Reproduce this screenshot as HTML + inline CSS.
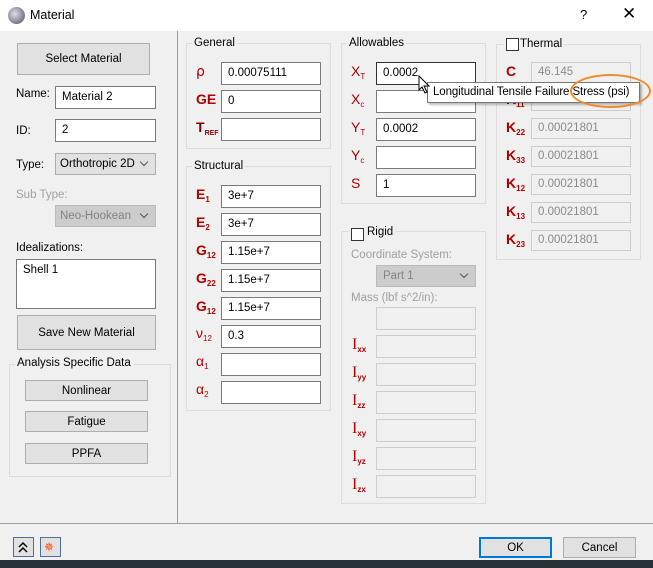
<!DOCTYPE html>
<html><head><meta charset="utf-8"><style>
*{margin:0;padding:0;box-sizing:border-box}
body{width:653px;height:568px;position:relative;background:#f0f0f0;font-family:"Liberation Sans",sans-serif;font-size:11.5px;color:#000;overflow:hidden}
.a{position:absolute}
.title{left:0;top:0;width:653px;height:31px;background:#fff}
.in{position:absolute;height:23px;background:#fff;border:1px solid #7a7a7a;padding:0 0 0 6px;line-height:21px;font-size:11.5px}
.dis{background:#f0f0f0;border:1px solid #cccccc;color:#8a8a8a}
.btn{position:absolute;background:#e1e1e1;border:1px solid #adadad;text-align:center;font-size:11.5px}
.grp{position:absolute;border:1px solid #dcdcdc}
.gl{position:absolute;background:#f0f0f0;padding:0 2px;font-size:11.5px}
.lb{position:absolute;color:#b00000;font-size:14px;font-weight:bold}
.lb sub{font-size:8px;vertical-align:-3px}
.sel{position:absolute;height:22px;border:1px solid #adadad;background:#e1e1e1;padding:0 0 0 6px;line-height:20px}
.sel:after{content:"";position:absolute;right:8px;top:5px;width:5px;height:5px;border-right:1px solid #555;border-bottom:1px solid #555;transform:rotate(45deg)}
.gray{color:#a0a0a0}
.cb{position:absolute;width:13px;height:13px;border:1px solid #333;background:#fff}
.Il{position:absolute;color:#b00000;font-family:"Liberation Serif",serif;font-size:16px}
.Il sub{font-family:"Liberation Sans",sans-serif;font-size:8px;font-weight:bold;vertical-align:-3px}
</style></head><body>
<div class="a title"></div>
<div class="a" style="left:8px;top:7px;width:17px;height:17px;border-radius:50%;background:radial-gradient(circle at 40% 40%,#dde,#778 70%,#445)"></div>
<div class="a" style="left:30px;top:8px;font-size:12.5px">Material</div>
<div class="a" style="left:580px;top:7px;font-size:13px">?</div>
<div class="a" style="left:622px;top:4px;font-size:17px">✕</div>

<div class="a" style="left:177px;top:31px;width:1px;height:492px;background:#a0a0a0"></div>
<div class="a" style="left:0;top:523px;width:653px;height:1px;background:#a0a0a0"></div>
<div class="a" style="left:0;top:560px;width:653px;height:8px;background:#263238"></div>

<!-- left -->
<div class="btn" style="left:17px;top:43px;width:133px;height:32px;line-height:31px">Select Material</div>
<div class="a" style="left:16px;top:88px">Name:</div>
<div class="in" style="left:55px;top:86px;width:101px">Material 2</div>
<div class="a" style="left:16px;top:125px">ID:</div>
<div class="in" style="left:55px;top:119px;width:101px">2</div>
<div class="a" style="left:16px;top:159px">Type:</div>
<div class="sel" style="left:55px;top:153px;width:101px;padding-left:4px">Orthotropic 2D</div>
<div class="a gray" style="left:16px;top:189px">Sub Type:</div>
<div class="sel" style="left:55px;top:205px;width:101px;background:#ccc;border-color:#bbb;color:#838383;padding-left:4px">Neo-Hookean</div>
<div class="a" style="left:16px;top:242px">Idealizations:</div>
<div class="in" style="left:16px;top:259px;width:140px;height:50px">Shell 1</div>
<div class="btn" style="left:17px;top:315px;width:139px;height:35px;line-height:34px">Save New Material</div>
<div class="grp" style="left:9px;top:364px;width:162px;height:113px"></div>
<div class="gl" style="left:15px;top:357px">Analysis Specific Data</div>
<div class="btn" style="left:25px;top:380px;width:123px;height:21px;line-height:20px">Nonlinear</div>
<div class="btn" style="left:25px;top:411px;width:123px;height:21px;line-height:20px">Fatigue</div>
<div class="btn" style="left:25px;top:443px;width:123px;height:21px;line-height:20px">PPFA</div>

<!-- General -->
<div class="grp" style="left:186px;top:43px;width:145px;height:106px"></div>
<div class="gl" style="left:192px;top:37px">General</div>
<div class="lb" style="left:196px;top:64px;font-weight:normal;font-family:'DejaVu Sans',sans-serif">ρ</div>
<div class="in" style="left:221px;top:62px;width:100px">0.00075111</div>
<div class="lb" style="left:196px;top:91px">GE</div>
<div class="in" style="left:221px;top:90px;width:100px">0</div>
<div class="lb" style="left:196px;top:119px;color:#800000">T<sub style="font-size:7px">REF</sub></div>
<div class="in" style="left:221px;top:118px;width:100px"></div>

<!-- Structural -->
<div class="grp" style="left:186px;top:166px;width:145px;height:245px"></div>
<div class="gl" style="left:192px;top:160px">Structural</div>
<div class="lb" style="left:196px;top:186px">E<sub>1</sub></div><div class="in" style="left:221px;top:185px;width:100px">3e+7</div>
<div class="lb" style="left:196px;top:214px">E<sub>2</sub></div><div class="in" style="left:221px;top:213px;width:100px">3e+7</div>
<div class="lb" style="left:196px;top:242px">G<sub>12</sub></div><div class="in" style="left:221px;top:241px;width:100px">1.15e+7</div>
<div class="lb" style="left:196px;top:270px">G<sub>22</sub></div><div class="in" style="left:221px;top:269px;width:100px">1.15e+7</div>
<div class="lb" style="left:196px;top:298px">G<sub>12</sub></div><div class="in" style="left:221px;top:297px;width:100px">1.15e+7</div>
<div class="lb" style="left:196px;top:325px;font-weight:normal">ν<sub>12</sub></div><div class="in" style="left:221px;top:325px;width:100px">0.3</div>
<div class="lb" style="left:196px;top:353px;font-weight:normal">α<sub>1</sub></div><div class="in" style="left:221px;top:353px;width:100px"></div>
<div class="lb" style="left:196px;top:381px;font-weight:normal">α<sub>2</sub></div><div class="in" style="left:221px;top:381px;width:100px"></div>

<!-- Allowables -->
<div class="grp" style="left:341px;top:43px;width:145px;height:161px"></div>
<div class="gl" style="left:347px;top:37px">Allowables</div>
<div class="lb" style="left:351px;top:63px;font-weight:normal">X<sub>T</sub></div><div class="in" style="left:376px;top:62px;width:100px;border-color:#333">0.0002</div>
<div class="lb" style="left:351px;top:91px;font-weight:normal">X<sub>c</sub></div><div class="in" style="left:376px;top:90px;width:100px"></div>
<div class="lb" style="left:351px;top:119px;font-weight:normal">Y<sub>T</sub></div><div class="in" style="left:376px;top:118px;width:100px">0.0002</div>
<div class="lb" style="left:351px;top:147px;font-weight:normal">Y<sub>c</sub></div><div class="in" style="left:376px;top:146px;width:100px"></div>
<div class="lb" style="left:351px;top:175px;font-weight:normal">S</div><div class="in" style="left:376px;top:174px;width:100px">1</div>

<!-- Rigid -->
<div class="grp" style="left:341px;top:231px;width:145px;height:273px"></div>
<div class="gl" style="left:349px;top:226px;padding-left:18px">Rigid</div>
<div class="cb" style="left:351px;top:228px"></div>
<div class="a gray" style="left:351px;top:249px">Coordinate System:</div>
<div class="sel" style="left:376px;top:265px;width:100px;background:#ccc;border-color:#bbb;color:#838383">Part 1</div>
<div class="a gray" style="left:351px;top:292px">Mass (lbf s^2/in):</div>
<div class="in dis" style="left:376px;top:307px;width:100px"></div>
<div class="Il" style="left:352px;top:336px">I<sub>xx</sub></div><div class="in dis" style="left:376px;top:335px;width:100px"></div>
<div class="Il" style="left:352px;top:364px">I<sub>yy</sub></div><div class="in dis" style="left:376px;top:363px;width:100px"></div>
<div class="Il" style="left:352px;top:392px">I<sub>zz</sub></div><div class="in dis" style="left:376px;top:391px;width:100px"></div>
<div class="Il" style="left:352px;top:420px">I<sub>xy</sub></div><div class="in dis" style="left:376px;top:419px;width:100px"></div>
<div class="Il" style="left:352px;top:448px">I<sub>yz</sub></div><div class="in dis" style="left:376px;top:447px;width:100px"></div>
<div class="Il" style="left:352px;top:476px">I<sub>zx</sub></div><div class="in dis" style="left:376px;top:475px;width:100px"></div>

<!-- Thermal -->
<div class="grp" style="left:496px;top:44px;width:145px;height:216px"></div>
<div class="gl" style="left:504px;top:38px;padding-left:16px">Thermal</div>
<div class="cb" style="left:506px;top:38px"></div>
<div class="lb" style="left:506px;top:63px">C</div><div class="in dis" style="left:531px;top:62px;width:100px;height:21px;line-height:19px">46.145</div>
<div class="lb" style="left:506px;top:91px">K<sub>11</sub></div><div class="in dis" style="left:531px;top:90px;width:100px;height:21px;line-height:19px">0.00021801</div>
<div class="lb" style="left:506px;top:119px">K<sub>22</sub></div><div class="in dis" style="left:531px;top:118px;width:100px;height:21px;line-height:19px">0.00021801</div>
<div class="lb" style="left:506px;top:147px">K<sub>33</sub></div><div class="in dis" style="left:531px;top:146px;width:100px;height:21px;line-height:19px">0.00021801</div>
<div class="lb" style="left:506px;top:175px">K<sub>12</sub></div><div class="in dis" style="left:531px;top:174px;width:100px;height:21px;line-height:19px">0.00021801</div>
<div class="lb" style="left:506px;top:203px">K<sub>13</sub></div><div class="in dis" style="left:531px;top:202px;width:100px;height:21px;line-height:19px">0.00021801</div>
<div class="lb" style="left:506px;top:231px">K<sub>23</sub></div><div class="in dis" style="left:531px;top:230px;width:100px;height:21px;line-height:19px">0.00021801</div>

<!-- tooltip -->
<div class="a" style="left:427px;top:82px;width:213px;height:21px;background:#fff;border:1px solid #767676;box-shadow:2px 2px 2px rgba(0,0,0,.25);padding:0 0 0 5px;line-height:19px;font-size:11.5px;letter-spacing:-0.1px;white-space:nowrap">Longitudinal Tensile Failure Stress (psi)</div>
<div class="a" style="left:570px;top:74px;width:81px;height:34px;border:2px solid #f08a2a;border-radius:50%"></div>
<svg class="a" style="left:418px;top:75px" width="14" height="20"><path d="M1 1 L1 15 L4 12 L7 18 L9 17 L6 11 L11 11 Z" fill="#fff" stroke="#000" stroke-width="1"/></svg>

<!-- bottom -->
<div class="a" style="left:13px;top:537px;width:21px;height:20px;border:1px solid #4a6fa0;background:#e1e1e1"></div>
<svg class="a" style="left:17px;top:540px" width="12" height="14"><path d="M2 7 L6 3 L10 7 M2 12 L6 8 L10 12" fill="none" stroke="#000" stroke-width="1.5"/></svg>
<div class="a" style="left:40px;top:537px;width:21px;height:20px;border:1px solid #4a6fa0;background:#e1e1e1"></div>
<div class="a" style="left:44px;top:541px;color:#ff4500;font-size:12px;line-height:12px">✵</div>
<div class="btn" style="left:479px;top:537px;width:73px;height:21px;line-height:18px;border:2px solid #0078d7">OK</div>
<div class="btn" style="left:563px;top:537px;width:73px;height:21px;line-height:20px">Cancel</div>
</body></html>
